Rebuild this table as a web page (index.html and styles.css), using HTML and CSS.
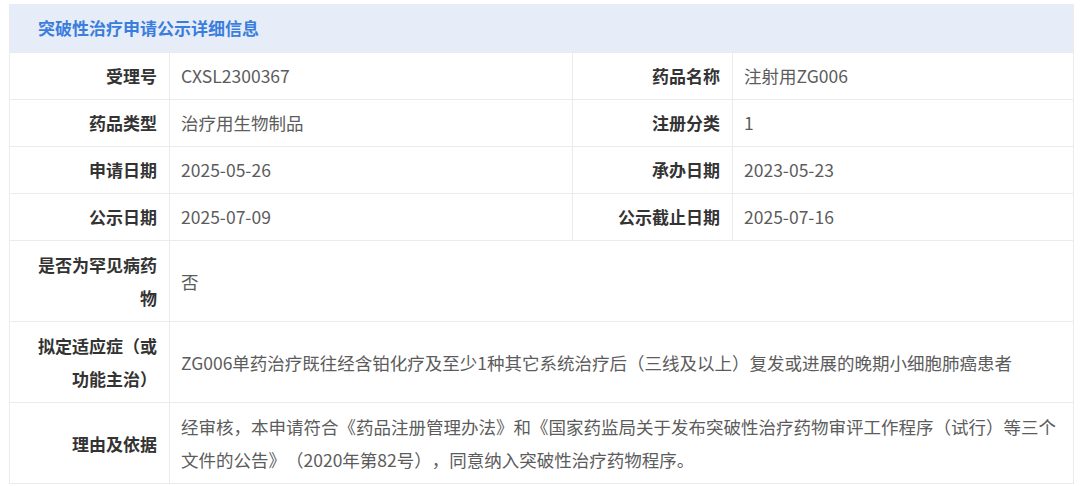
FILE: index.html
```html
<!DOCTYPE html>
<html lang="zh-CN">
<head>
<meta charset="utf-8">
<link rel="stylesheet" href="styles.css">
</head>
<body>
<div class="sheet">
  <div class="head">突破性治疗申请公示详细信息</div>

  <div class="cell label">受理号</div>
  <div class="cell value">CXSL2300367</div>
  <div class="cell label">药品名称</div>
  <div class="cell value">注射用ZG006</div>

  <div class="cell label">药品类型</div>
  <div class="cell value">治疗用生物制品</div>
  <div class="cell label">注册分类</div>
  <div class="cell value">1</div>

  <div class="cell label">申请日期</div>
  <div class="cell value">2025-05-26</div>
  <div class="cell label">承办日期</div>
  <div class="cell value">2023-05-23</div>

  <div class="cell label">公示日期</div>
  <div class="cell value">2025-07-09</div>
  <div class="cell label">公示截止日期</div>
  <div class="cell value">2025-07-16</div>

  <div class="cell label tall">是否为罕见病药物</div>
  <div class="cell value wide tall">否</div>

  <div class="cell label tall">拟定适应症（或功能主治）</div>
  <div class="cell value wide tall">ZG006单药治疗既往经含铂化疗及至少1种其它系统治疗后（三线及以上）复发或进展的晚期小细胞肺癌患者</div>

  <div class="cell label tall">理由及依据</div>
  <div class="cell value wide tall">经审核，本申请符合《药品注册管理办法》和《国家药监局关于发布突破性治疗药物审评工作程序（试行）等三个文件的公告》（2020年第82号），同意纳入突破性治疗药物程序。</div>
</div>
</body>
</html>
```

FILE: styles.css
```css
* { box-sizing: border-box; }

html, body {
  margin: 0;
  background: #ffffff;
}

body {
  padding: 4px 0 0 9px;
  font-family: "Noto Sans CJK SC", "Noto Sans", sans-serif;
  text-spacing-trim: space-all;
}

.sheet {
  width: 1065px;
  display: grid;
  grid-template-columns: 159px 402px 159px 340px;
  gap: 1px;
  background: #ebebeb;
  border: 1px solid #ebebeb;
  border-top: 0;
}

.head {
  grid-column: 1 / -1;
  height: 48px;
  background: #e6edf8;
  color: #3a7ddc;
  font-size: 17px;
  font-weight: 700;
  line-height: 48px;
  padding-left: 28px;
}

.cell {
  background: #ffffff;
  display: flex;
  align-items: center;
  min-height: 46px;
  padding: 7px 12px 7px 11px;
  line-height: 32px;
}

.tall {
  min-height: 80px;
  line-height: 33px;
}

.label {
  justify-content: flex-end;
  text-align: right;
  font-size: 17px;
  font-weight: 700;
  color: #333333;
  padding-left: 16px;
  padding-right: 12px;
}

.value {
  font-size: 17.5px;
  color: #5c5c5c;
}

.wide {
  grid-column: 2 / -1;
}
```
